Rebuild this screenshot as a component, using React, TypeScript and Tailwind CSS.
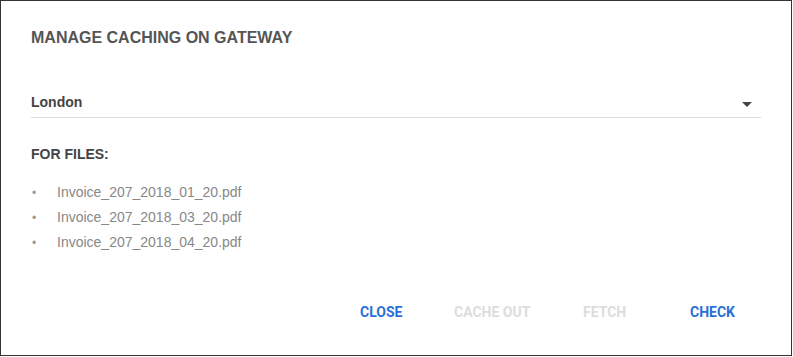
const files = [
  'Invoice_207_2018_01_20.pdf',
  'Invoice_207_2018_03_20.pdf',
  'Invoice_207_2018_04_20.pdf',
]

export default function App() {
  return (
    <div className="w-[793px] h-[357px] bg-white">
      <div
        className="w-[792px] h-[356px] border border-[#333] bg-white flex flex-col px-[30px]"
        style={{ fontFamily: '"Liberation Sans", Arial, sans-serif' }}
      >
        <h2 className="mt-[27px] text-[16px] leading-[20px] font-bold text-[#555]">
          MANAGE CACHING ON GATEWAY
        </h2>

        <div className="mt-[46px] flex items-center justify-between border-b border-[#ddd] pb-[6px]">
          <span className="text-[14px] leading-[17px] font-bold text-[#444]">London</span>
          <svg width="10" height="5" viewBox="0 0 10 5" className="mr-[9px] mt-[3px]">
            <path d="M0 0 H10 L5 5 Z" fill="#444" />
          </svg>
        </div>

        <div className="mt-[28px] text-[14px] leading-[17px] font-bold text-[#444]">FOR FILES:</div>

        <ul className="mt-[17px] flex flex-col">
          {files.map(f => (
            <li key={f} className="flex items-center h-[25px] text-[14px] text-[#888]">
              <span className="w-[26px] pl-[1px] text-[12px] text-[#999]">•</span>
              {f}
            </li>
          ))}
        </ul>

        <div
          className="mt-auto mb-[32px] flex justify-end text-[14px] font-bold"
          style={{ fontFamily: 'Roboto, sans-serif' }}
        >
          <button className="w-[94px] text-left text-[#2b6fd9]">CLOSE</button>
          <button className="w-[129px] text-left text-[#ddd]">CACHE OUT</button>
          <button className="w-[107px] text-left text-[#ddd]">FETCH</button>
          <button className="w-[71px] text-left text-[#2b6fd9]">CHECK</button>
        </div>
      </div>
    </div>
  )
}
